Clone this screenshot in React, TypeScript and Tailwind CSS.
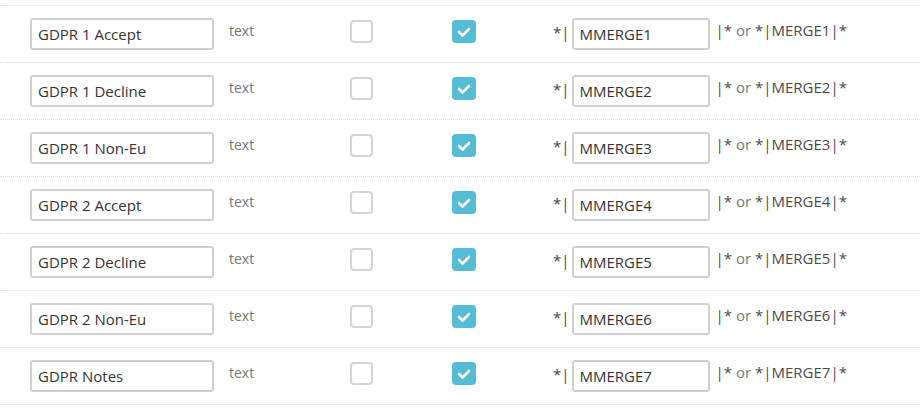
const rows = [
  { label: 'GDPR 1 Accept', tag: 'MMERGE1', merge: 'MERGE1' },
  { label: 'GDPR 1 Decline', tag: 'MMERGE2', merge: 'MERGE2' },
  { label: 'GDPR 1 Non-Eu', tag: 'MMERGE3', merge: 'MERGE3' },
  { label: 'GDPR 2 Accept', tag: 'MMERGE4', merge: 'MERGE4' },
  { label: 'GDPR 2 Decline', tag: 'MMERGE5', merge: 'MERGE5' },
  { label: 'GDPR 2 Non-Eu', tag: 'MMERGE6', merge: 'MERGE6' },
  { label: 'GDPR Notes', tag: 'MMERGE7', merge: 'MERGE7' },
];

function Checked() {
  return (
    <div className="w-6 h-[23px] rounded-[4px] bg-[#55bcd6] flex items-center justify-center">
      <svg width="24" height="23" viewBox="0 0 24 23" fill="none">
        <path d="M7 12 L10.5 15.5 L17 9" stroke="white" strokeWidth="2.6" strokeLinecap="round" strokeLinejoin="round" />
      </svg>
    </div>
  );
}

export default function App() {
  return (
    <div className="w-[920px] h-[410px] bg-white pt-[5px] font-['Open_Sans',sans-serif] overflow-hidden">
      {rows.map((r) => (
        <div
          key={r.tag}
          className="flex h-[57px] last:h-[58px] border-t last:border-b border-dotted border-[#dadada]"
        >
          {/* field label */}
          <div className="w-[229px] pl-[30px] pt-3">
            <input
              readOnly
              value={r.label}
              className="w-[184px] h-8 border-2 border-[#d0d0d0] rounded-[3px] px-[6px] text-[15px] text-[#333] outline-none"
            />
          </div>

          {/* type */}
          <div className="w-[121px] pt-[15px] text-[14px] leading-5 text-[#777]">text</div>

          {/* required */}
          <div className="w-[102px] pt-[14px]">
            <div className="w-[23px] h-[23px] rounded-[4px] border-2 border-[#d4d4d4] bg-white" />
          </div>

          {/* visible */}
          <div className="w-[101px] pt-[14px]">
            <Checked />
          </div>

          {/* merge tag */}
          <div className="flex items-start pt-3">
            <span className="pt-[2px] pr-[2px] text-[15px] leading-6 text-[#444]">*|</span>
            <input
              readOnly
              value={r.tag}
              className="w-[138px] h-8 border-2 border-[#d0d0d0] rounded-[3px] px-[6px] text-[15px] text-[#333] outline-none"
            />
            <span className="pl-[6px] pt-[2px] text-[15px] leading-5 text-[#4a4a4a]">
              |*<span className="text-[#777]"> or </span>*|{r.merge}|*
            </span>
          </div>
        </div>
      ))}
    </div>
  );
}
